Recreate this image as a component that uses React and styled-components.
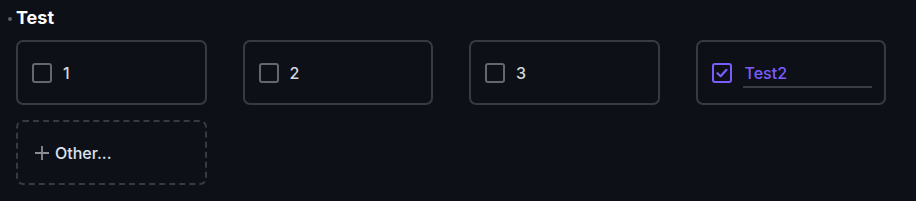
import styled, { createGlobalStyle } from "styled-components";

const GlobalStyle = createGlobalStyle`
  html, body {
    margin: 0;
    background: #0d1017;
    font-family: Inter, "Noto Sans", sans-serif;
  }
`;

const StyledSection = styled.section`
  padding: 7px 30px 0 16px;
  display: flex;
  flex-direction: column;
  gap: 11px;
`;

const StyledHeading = styled.h2`
  position: relative;
  margin: 0;
  font-size: 18px;
  font-weight: 700;
  line-height: 22px;
  color: #ffffff;

  &::before {
    content: "";
    position: absolute;
    left: -8px;
    top: 10px;
    width: 4px;
    height: 4px;
    border-radius: 50%;
    background: #5b606a;
  }
`;

const StyledGrid = styled.div`
  display: grid;
  grid-template-columns: repeat(4, minmax(0, 1fr));
  column-gap: 36px;
  row-gap: 15px;
`;

const StyledCard = styled.label`
  display: flex;
  align-items: center;
  gap: 11px;
  height: 65px;
  box-sizing: border-box;
  padding: 0 12px 0 14px;
  border: 2px ${(p) => (p.$dashed ? "dashed" : "solid")} #363a42;
  border-radius: 7px;
  cursor: pointer;
`;

const StyledBox = styled.span`
  flex: none;
  width: 20px;
  height: 20px;
  box-sizing: border-box;
  border: 2px solid ${(p) => (p.$checked ? "#7b5cff" : "#66676d")};
  border-radius: 3px;
  display: flex;
  align-items: center;
  justify-content: center;
`;

const StyledLabel = styled.span`
  font-size: 16px;
  font-weight: 500;
  color: #d4d7dd;
`;

const StyledInput = styled.input`
  flex: 1;
  min-width: 0;
  background: transparent;
  border: none;
  border-bottom: 2px solid #3a3d45;
  outline: none;
  margin-top: 4px;
  padding: 2px 2px 3px;
  font-family: inherit;
  font-size: 16px;
  font-weight: 500;
  color: #7b5cff;
`;

const StyledOther = styled.span`
  display: flex;
  align-items: center;
  gap: 5px;
  margin-left: 2px;
  font-size: 16px;
  font-weight: 500;
  color: #dbe3f0;
`;

function Check() {
  return (
    <svg width="14" height="14" viewBox="0 0 14 14" fill="none">
      <path
        d="M2.5 7.2 L5.6 10.2 L11.5 3.8"
        stroke="#7b5cff"
        strokeWidth="2.2"
        strokeLinecap="round"
        strokeLinejoin="round"
      />
    </svg>
  );
}

function Plus() {
  return (
    <svg width="16" height="16" viewBox="0 0 16 16" fill="none">
      <path d="M8 1 V15 M1 8 H15" stroke="#8a8d93" strokeWidth="1.8" />
    </svg>
  );
}

const options = ["1", "2", "3"];

export default function App() {
  return (
    <>
      <GlobalStyle />
      <StyledSection>
        <StyledHeading>Test</StyledHeading>
        <StyledGrid>
          {options.map((o) => (
            <StyledCard key={o}>
              <StyledBox />
              <StyledLabel>{o}</StyledLabel>
            </StyledCard>
          ))}
          <StyledCard>
            <StyledBox $checked>
              <Check />
            </StyledBox>
            <StyledInput defaultValue="Test2" />
          </StyledCard>
          <StyledCard $dashed>
            <StyledOther>
              <Plus />
              Other...
            </StyledOther>
          </StyledCard>
        </StyledGrid>
      </StyledSection>
    </>
  );
}
